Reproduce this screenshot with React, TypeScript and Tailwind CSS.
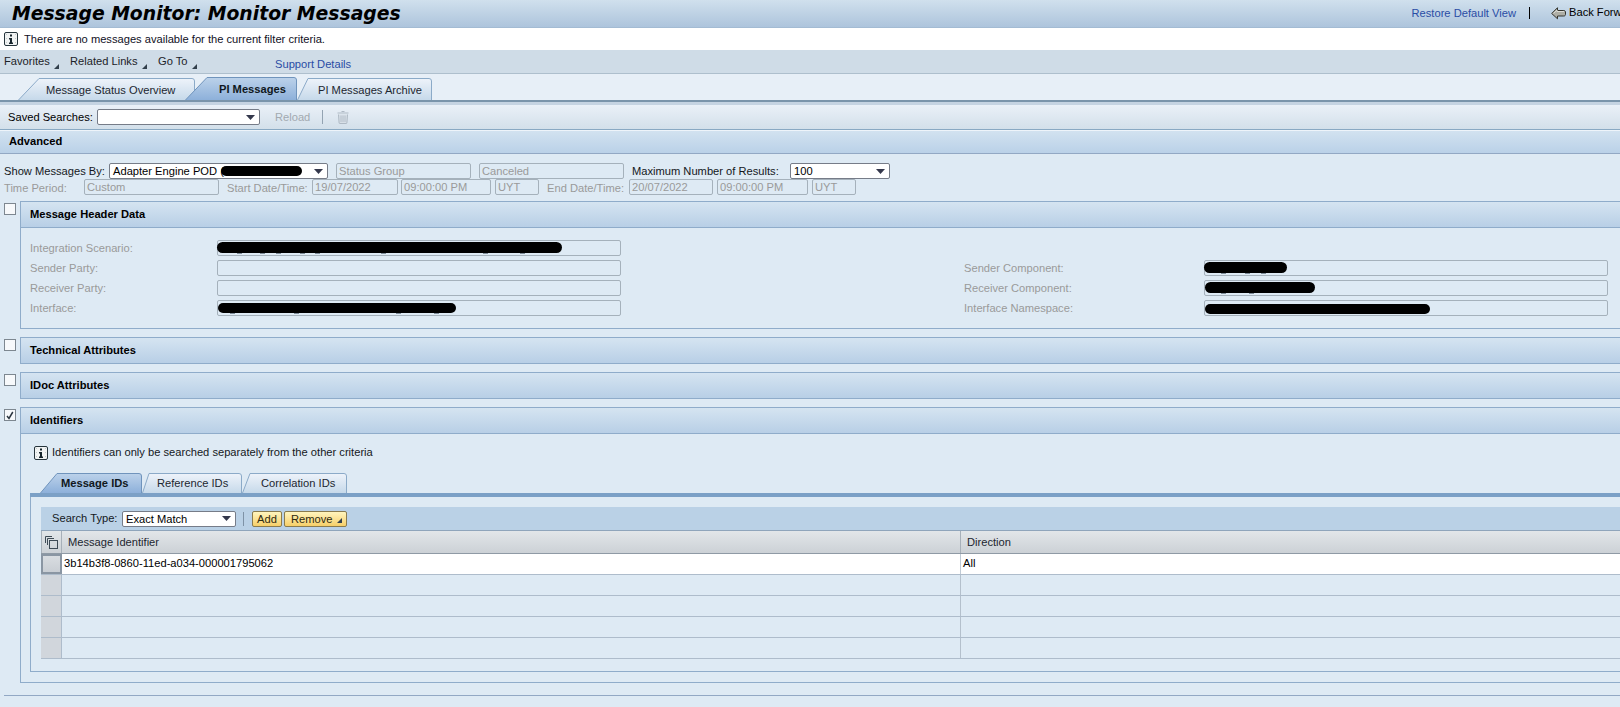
import type { ReactNode } from 'react'

const font = "font-['Liberation_Sans',Arial,sans-serif]"

function InfoIcon() {
  return (
    <svg width="14" height="14" viewBox="0 0 14 14" className="shrink-0">
      <rect x="0.5" y="0.5" width="13" height="13" rx="1.5" fill="#f1f3f3" stroke="#26343c" />
      <rect x="2" y="2" width="1" height="1" fill="#c6cccc" />
      <rect x="11" y="2" width="1" height="1" fill="#c6cccc" />
      <rect x="2" y="6" width="1" height="1" fill="#c6cccc" />
      <rect x="11" y="6" width="1" height="1" fill="#c6cccc" />
      <rect x="2" y="10" width="1" height="1" fill="#c6cccc" />
      <rect x="11" y="10" width="1" height="1" fill="#c6cccc" />
      <path d="M6 2.500h2v2H6zM5 6h3v4.500h1V12H5v-1.500h1V7.500H5z" fill="#16242c" />
    </svg>
  )
}

function CornerArrow() {
  return (
    <svg width="5" height="5" viewBox="0 0 5 5" className="shrink-0">
      <path d="M5 0v5H0z" fill="#33404c" />
    </svg>
  )
}

function SelectArrow() {
  return (
    <svg width="9" height="5" viewBox="0 0 9 5" className="shrink-0">
      <path d="M0 0h9L4.500 5z" fill="#34384c" />
    </svg>
  )
}

function BackArrow() {
  return (
    <svg width="15" height="13" viewBox="0 0 15 13">
      <path d="M.7 6.500 6.500.7v2.800h6.300c1 0 1.700.7 1.700 1.500v2.600c0 .8-.7 1.400-1.700 1.400H6.500v2.800z" fill="#aeaea6" stroke="#34342e" />
      <path d="M2.500 6.400 6 3.200v1.300h7" fill="none" stroke="#dcdcd6" />
    </svg>
  )
}

function TrashIcon() {
  return (
    <svg width="12" height="14" viewBox="0 0 12 14">
      <path d="M4.500 1.500h3M.5 3h11M1.500 4.500l.6 8.500c0 .3.200.5.500.5h6.800c.3 0 .5-.2.500-.5l.6-8.500" fill="#d7dfe7" stroke="#aeb9c4" />
      <path d="M4 5.500V12M6 5.500V12M8 5.500V12" stroke="#b4bfca" />
    </svg>
  )
}

function CopyIcon() {
  return (
    <svg width="13" height="13" viewBox="0 0 13 13">
      <path d="M.5 7V.5H7M2.500 9V2.500H9" fill="none" stroke="#3d4a55" />
      <rect x="4.500" y="4.500" width="8" height="8" fill="none" stroke="#3d4a55" />
    </svg>
  )
}

function Tab({ label, width, height, slant, active, textClass, wrapClass }: {
  label: string
  width: number
  height: number
  slant: number
  active?: boolean
  textClass: string
  wrapClass: string
}) {
  const id = `tab-${label.replace(/\s/g, '')}`
  return (
    <div className={`relative flex items-center ${wrapClass}`}>
      <svg width={width} height={height} className="absolute left-0 top-0">
        <defs>
          <linearGradient id={id} x1="0" y1="0" x2="0" y2="1">
            <stop offset="0" stopColor={active ? '#bcd2ea' : '#eef3fa'} />
            <stop offset="1" stopColor={active ? '#8db0da' : '#c6d9ea'} />
          </linearGradient>
        </defs>
        <path
          d={`M0.500 ${height} L${slant} 0.500 H${width - 3} Q${width - 0.5} 0.500 ${width - 0.5} 3 V${height}`}
          fill={`url(#${id})`}
          stroke={active ? '#7094bc' : '#8baac8'}
        />
      </svg>
      <span className={`relative leading-[14px] ${textClass}`}>{label}</span>
    </div>
  )
}

function ReadOnly({ className, children, blob }: { className: string; children?: ReactNode; blob?: ReactNode }) {
  return (
    <div className={`relative h-[16px] shrink-0 rounded-[2px] border border-[#a5b1bb] px-[2px] leading-[14px] text-[#9a9a9a] ${className}`}>
      {children}
      {blob}
    </div>
  )
}

function Select({ className, children }: { className: string; children?: ReactNode }) {
  return (
    <div className={`flex h-[16px] shrink-0 items-center justify-between rounded-[2px] border border-[#767c88] bg-white pl-[3px] pr-[4px] leading-[14px] text-black ${className}`}>
      <div className="flex items-center">{children}</div>
      <SelectArrow />
    </div>
  )
}

function Redacted({ className, dashes }: { className: string; dashes: number[] }) {
  return (
    <>
      <div className={`absolute rounded-full bg-black ${className}`} />
      {dashes.map((d) => (
        <div key={d} className="absolute top-[12px] h-px w-[5px] bg-[#7e8c99]" style={{ left: d }} />
      ))}
    </>
  )
}

function Panel({ title, checked, children }: { title: string; checked?: boolean; children?: ReactNode }) {
  return (
    <div className="flex pl-[4px]">
      <div className="mr-[4px] mt-[2px] flex h-[12px] w-[12px] shrink-0 items-center justify-center border border-[#7d8790] bg-[#f7f9fb]">
        {checked && (
          <svg width="8" height="9" viewBox="0 0 8 9">
            <path d="M1 5l2 2.500L6.800 1" fill="none" stroke="#2c3640" strokeWidth="1.500" />
          </svg>
        )}
      </div>
      <div className="min-w-0 flex-1">
        <div className="flex h-[27px] items-center border-y border-l border-[#8facca] bg-gradient-to-b from-[#d5e4f1] to-[#b8cfe6] pb-[2px] pl-[9px] font-bold leading-[14px] text-black">
          {title}
        </div>
        {children}
      </div>
    </div>
  )
}

const headerRows = [
  { left: 'Integration Scenario:', right: '', leftBlob: <Redacted className="left-[-1px] top-[1px] h-[11px] w-[345px]" dashes={[19, 42, 58, 82, 97, 163, 265, 302]} /> },
  { left: 'Sender Party:', right: 'Sender Component:', rightBlob: <Redacted className="left-[-1px] top-[1px] h-[11px] w-[83px]" dashes={[16, 40, 56]} /> },
  { left: 'Receiver Party:', right: 'Receiver Component:', rightBlob: <Redacted className="left-0 top-[1px] h-[11px] w-[110px]" dashes={[16, 44]} /> },
  { left: 'Interface:', right: 'Interface Namespace:', leftBlob: <Redacted className="left-0 top-[2px] h-[10px] w-[238px]" dashes={[12, 76, 178, 216]} />, rightBlob: <Redacted className="left-0 top-[3px] h-[10px] w-[225px]" dashes={[]} /> },
]

export default function App() {
  return (
    <div className={`h-[707px] w-[1620px] overflow-hidden whitespace-nowrap bg-[#deeaf4] text-[11.15px] text-black ${font}`}>
      {/* page title */}
      <div className="flex h-[28px] items-center justify-between border-b border-[#a3bbd3] bg-gradient-to-b from-[#d0e0ed] to-[#adc4dc] pl-[12px]">
        <h1 className="font-['DejaVu_Sans',sans-serif] text-[18.8px] font-bold italic leading-[24px] text-black">Message Monitor: Monitor Messages</h1>
        <div className="flex items-center">
          <a className="text-[#2a4da5]">Restore Default View</a>
          <div className="ml-[13px] h-[12px] w-px bg-black" />
          <div className="ml-[21px] mr-[-4px]"><BackArrow /></div>
          <span className="ml-[7px] w-[51px] overflow-hidden pb-[2px]">Back Forward</span>
        </div>
      </div>

      <div className="flex h-[22px] items-center gap-[6px] bg-white pl-[4px]">
        <InfoIcon />
        <span className="text-[#10101e]">There are no messages available for the current filter criteria.</span>
      </div>

      <div className="flex h-[24px] border-b border-[#aebfcd] bg-[#cfdce7] pl-[4px] text-[#1c2228]">
        <div className="flex w-[66px] items-start gap-[4px] pt-[4px] leading-[14px]">Favorites<div className="mt-[10px]"><CornerArrow /></div></div>
        <div className="flex w-[88px] items-start gap-[4px] pt-[4px] leading-[14px]">Related Links<div className="mt-[10px]"><CornerArrow /></div></div>
        <div className="flex w-[117px] items-start gap-[4px] pt-[4px] leading-[14px]">Go To<div className="mt-[10px]"><CornerArrow /></div></div>
        <a className="pt-[7px] leading-[14px] text-[#2a4da5]">Support Details</a>
      </div>

      {/* main tabs */}
      <div className="flex h-[26px] items-end bg-[#e7eff7] pl-[18px]">
        <Tab label="Message Status Overview" width={177} height={22} slant={21} textClass="pl-[28px] pt-[1px] text-[#1c2630]" wrapClass="h-[22px] w-[177px]" />
        <Tab label="PI Messages" width={112} height={23} slant={22} active textClass="pl-[34px] font-bold text-[#101820]" wrapClass="z-10 ml-[-10px] h-[23px] w-[112px]" />
        <Tab label="PI Messages Archive" width={135} height={22} slant={11} textClass="pl-[21px] pt-[1px] text-[#1c2630]" wrapClass="h-[22px] w-[135px]" />
      </div>
      <div className="h-[2px] bg-[#7a94ab]" />
      <div className="h-[3px] bg-[#c5d3e2]" />

      {/* saved searches */}
      <div className="flex h-[25px] items-center border-b border-[#89a9c3] bg-gradient-to-b from-[#eaf0f8] to-[#d3e0ea] pl-[8px]">
        <span className="w-[89px]">Saved Searches:</span>
        <Select className="w-[163px]" />
        <span className="ml-[15px] w-[47px] text-[#a2a9b0]">Reload</span>
        <div className="h-[14px] w-px bg-[#93a3b2]" />
        <div className="ml-[14px]"><TrashIcon /></div>
      </div>
      <div className="h-px bg-[#eef4fa]" />

      <div className="flex h-[23px] items-center border-b border-[#92a8c4] bg-gradient-to-b from-[#d2e2f0] to-[#bad1e8] pb-[2px] pl-[9px] font-bold">Advanced</div>

      {/* filter rows */}
      <div className="mt-[9px] flex h-[16px] items-center leading-[14px]">
        <span className="w-[109px] shrink-0 pl-[4px] text-[#14181c]">Show Messages By:</span>
        <Select className="w-[219px]">
          Adapter Engine POD (<div className="ml-[-3px] h-[10px] w-[81px] rounded-full bg-black" />
        </Select>
        <ReadOnly className="ml-[8px] w-[135px]">Status Group</ReadOnly>
        <ReadOnly className="ml-[8px] w-[145px]">Canceled</ReadOnly>
        <span className="ml-[8px] w-[158px] shrink-0 text-[#14181c]">Maximum Number of Results:</span>
        <Select className="w-[100px]">100</Select>
      </div>
      <div className="flex h-[16px] items-center leading-[14px] text-[#9a9a9a]">
        <span className="w-[84px] shrink-0 pl-[4px] pt-[2px]">Time Period:</span>
        <ReadOnly className="w-[135px]">Custom</ReadOnly>
        <span className="ml-[8px] w-[85px] shrink-0 pt-px">Start Date/Time:</span>
        <ReadOnly className="w-[86px]">19/07/2022</ReadOnly>
        <ReadOnly className="ml-[3px] w-[90px]">09:00:00 PM</ReadOnly>
        <ReadOnly className="ml-[4px] w-[44px]">UYT</ReadOnly>
        <span className="ml-[8px] w-[82px] shrink-0 pt-px">End Date/Time:</span>
        <ReadOnly className="w-[84px]">20/07/2022</ReadOnly>
        <ReadOnly className="ml-[4px] w-[91px]">09:00:00 PM</ReadOnly>
        <ReadOnly className="ml-[4px] w-[44px]">UYT</ReadOnly>
      </div>

      <div className="mt-[6px] flex flex-col gap-[8px]">
        <Panel title="Message Header Data">
          <div className="flex flex-col gap-[4px] border-b border-l border-[#8facca] py-[12px] pl-[9px] text-[#9a9a9a]">
            {headerRows.map((r) => (
              <div key={r.left} className="flex h-[16px] items-center leading-[14px]">
                <span className="w-[187px] shrink-0">{r.left}</span>
                <ReadOnly className="w-[404px]" blob={r.leftBlob} />
                {r.right && (
                  <>
                    <span className="ml-[343px] w-[240px] shrink-0">{r.right}</span>
                    <ReadOnly className="w-[404px]" blob={r.rightBlob} />
                  </>
                )}
              </div>
            ))}
          </div>
        </Panel>

        <Panel title="Technical Attributes" />
        <Panel title="IDoc Attributes" />

        <Panel title="Identifiers" checked>
          <div className="border-b border-l border-[#8facca] pb-[10px] pl-[9px] pt-[12px]">
            <div className="flex h-[14px] items-center gap-[4px] pl-[4px]">
              <InfoIcon />
              <span className="pb-[2px] text-[#14181c]">Identifiers can only be searched separately from the other criteria</span>
            </div>

            <div className="ml-[10px] mt-[13px] flex h-[20px] items-end">
              <Tab label="Message IDs" width={102} height={20} slant={17} active textClass="pl-[21px] font-bold text-[#101820]" wrapClass="h-[20px] w-[102px]" />
              <Tab label="Reference IDs" width={100} height={20} slant={7} textClass="pl-[15px] text-[#1c2630]" wrapClass="h-[20px] w-[100px]" />
              <Tab label="Correlation IDs" width={105} height={20} slant={8} textClass="pl-[19px] text-[#1c2630]" wrapClass="h-[20px] w-[105px]" />
            </div>
            <div className="h-[4px] bg-[#7ba0c6]" />

            <div className="border-b border-l border-[#8facca] pb-[12px] pl-[10px] pt-[10px]">
              <div className="flex h-[24px] items-center border-b border-[#8fa5bb] bg-[#bad1e6] pl-[11px] text-[#14181c]">
                <span className="w-[70px] shrink-0">Search Type:</span>
                <Select className="w-[114px]">Exact Match</Select>
                <div className="ml-[7px] h-[14px] w-px bg-[#7e92a6]" />
                <button className="ml-[8px] h-[16px] w-[30px] rounded-[2px] border border-[#8a7b4d] bg-gradient-to-b from-[#fff5bd] to-[#f6cf67] leading-[14px] text-[#2e2a10]">Add</button>
                <button className="ml-[2px] flex h-[16px] w-[63px] items-center justify-between rounded-[2px] border border-[#8a7b4d] bg-gradient-to-b from-[#fff5bd] to-[#f6cf67] pl-[6px] pr-[4px] leading-[14px] text-[#2e2a10]">
                  Remove
                  <div className="mt-[4px]"><CornerArrow /></div>
                </button>
              </div>

              <div className="grid h-[23px] grid-cols-[21px_899px_1fr] border-b border-[#8f9aa5] bg-gradient-to-b from-[#e2e6e9] to-[#ccd1d6] text-[#1c2630]">
                <div className="flex items-center justify-center border-l border-r border-[#a7b0b9]"><CopyIcon /></div>
                <div className="flex items-center border-r border-[#a7b0b9] pl-[6px]">Message Identifier</div>
                <div className="flex items-center pl-[6px]">Direction</div>
              </div>

              <div className="grid h-[21px] grid-cols-[21px_899px_1fr] border-b border-[#aebccb] bg-white">
                <div className="border-2 border-[#8a96a3] bg-gradient-to-b from-[#d9dde1] to-[#c9ced4]" />
                <div className="flex items-center border-r border-[#c0cbd6] pb-px pl-[2px]">3b14b3f8-0860-11ed-a034-000001795062</div>
                <div className="flex items-center pb-px pl-[2px]">All</div>
              </div>
              {[1, 2, 3, 4].map((n) => (
                <div key={n} className="grid h-[21px] grid-cols-[21px_899px_1fr] border-b border-[#aebccb]">
                  <div className="border-r border-[#aebccb] bg-[#d1d6dc]" />
                  <div className="border-r border-[#b4c0cc]" />
                  <div />
                </div>
              ))}
            </div>
          </div>
        </Panel>
      </div>

      <div className="ml-[4px] mt-[12px] h-px bg-[#92a8c4]" />
    </div>
  )
}
